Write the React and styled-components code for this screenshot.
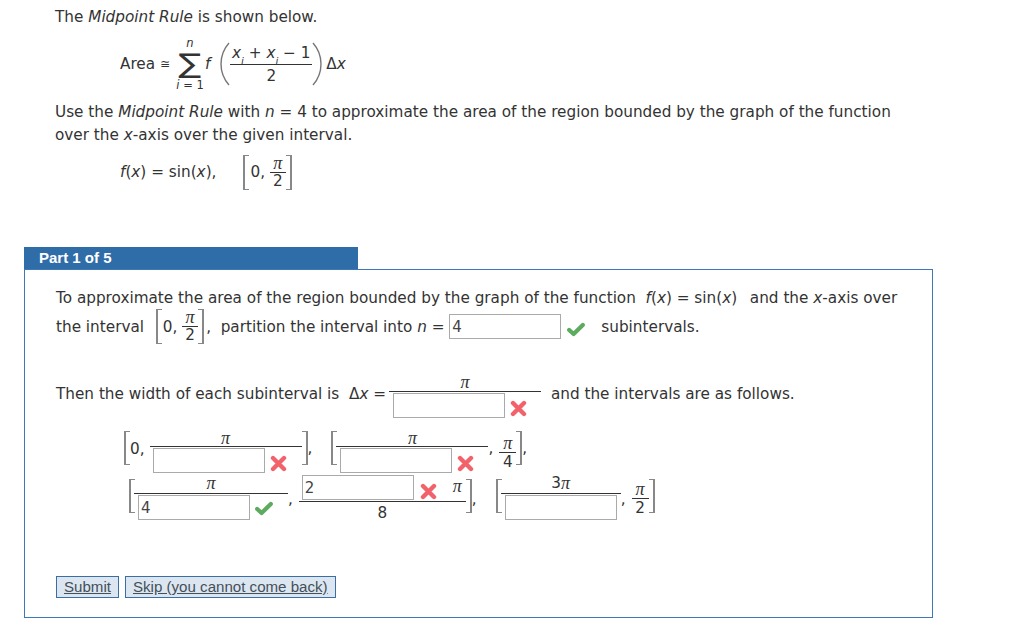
import React from 'react'
import styled, { createGlobalStyle } from 'styled-components'

const GlobalStyle = createGlobalStyle`
  html, body { margin: 0; padding: 0; background: #fff; }
  body {
    font-family: "DejaVu Sans", Verdana, sans-serif;
    font-size: 15.25px;
    color: #333;
  }
`

const Page = styled.div`
  width: 1024px;
  height: 628px;
  overflow: hidden;
  box-sizing: border-box;
  padding: 5px 91px 0 24px;
`

const Question = styled.div`
  padding-left: 31px;
  height: 242px;
`

const Line = styled.div`
  height: ${p => p.$h || 23}px;
  line-height: ${p => p.$h || 23}px;
  margin-top: ${p => p.$mt || 0}px;
  white-space: pre;
`

const MathRow = styled.div`
  display: flex;
  align-items: ${p => p.$align || 'center'};
  height: ${p => p.$h}px;
  margin-top: ${p => p.$mt || 0}px;
  padding-left: ${p => p.$pl || 0}px;
  white-space: pre;
`

const Gap = styled.span`
  display: inline-block;
  flex: none;
  width: ${p => p.$w}px;
`

const Piece = styled.span`
  flex: none;
  margin: ${p => p.$top || 0}px 0 ${p => p.$bottom || 0}px ${p => p.$left || 0}px;
  ${p => p.$size && `font-size: ${p.$size}px;`}
`

const Pi = styled.i`
  font-family: "Liberation Serif", serif;
  font-size: 18px;
`

const Frac = styled.span`
  display: inline-grid;
  flex: none;
  width: ${p => p.$w}px;
  grid-template-rows: ${p => (p.$free ? 'auto 1px auto' : '1fr 1px 1fr')};
  margin-top: ${p => p.$top || 0}px;
  margin-left: ${p => p.$ml || 0}px;
  line-height: ${p => p.$lh || 15}px;
`

const Num = styled.span`
  display: flex;
  justify-content: ${p => (p.$start ? 'flex-start' : 'center')};
  align-items: flex-end;
  padding: 0 0 ${p => p.$pb ?? 1}px ${p => (p.$start ? 3 : 0)}px;
`

const Bar = styled.span`
  display: block;
  background: #333;
`

const Den = styled.span`
  display: flex;
  justify-content: center;
  align-items: flex-start;
  padding-top: ${p => p.$pt || 1}px;
`

const AnswerDen = styled(Den)`
  justify-content: flex-start;
  padding: 1px 0 0 ${p => p.$pl || 3}px;
`

const Bracket = styled.span`
  display: block;
  flex: none;
  box-sizing: border-box;
  width: 6px;
  height: ${p => p.$h}px;
  margin-top: ${p => p.$top || 0}px;
  border: 1px solid #888;
  ${p => (p.$close
    ? 'border-left: 0; border-right-width: 2px;'
    : 'border-right: 0; border-left-width: 2px;')}
`

const Answer = styled.input`
  display: block;
  flex: none;
  box-sizing: border-box;
  width: 112px;
  height: 25px;
  margin: 0;
  padding: 0 2px;
  border: 1px solid #aaa;
  border-radius: 0;
  outline: none;
  background: #fff;
  color: #444;
  font-family: "DejaVu Sans", Verdana, sans-serif;
  font-size: 15px;
`

const Mark = styled.svg`
  display: block;
  flex: none;
  margin: ${p => p.$top || 7}px 0 0 ${p => p.$left || 5}px;
`

const Cross = props => (
  <Mark width="17" height="17" viewBox="0 0 17 17" {...props}>
    <path d="M3 3 L14 14 M14 3 L3 14" stroke="#f2626b" strokeWidth="4.4" strokeLinecap="round" />
  </Mark>
)

const Check = props => (
  <Mark width="18" height="15" viewBox="0 0 18 15" {...props}>
    <path d="M2.2 8 L6.6 12 L15.8 3" fill="none" stroke="#5cab5e" strokeWidth="4.2" strokeLinejoin="round" strokeLinecap="round" />
  </Mark>
)

const SumBlock = styled.span`
  display: inline-flex;
  flex: none;
  flex-direction: column;
  align-items: center;
  width: 30px;
  margin-left: 5px;
  font-size: 11.5px;
  line-height: 12px;
`

const Sigma = styled.span`
  font-size: 26px;
  line-height: 30px;
  color: #333;
  transform: scale(1.3, 1.05);
`

const Sub = styled.sub`
  font-size: 10px;
  line-height: 0;
  font-style: italic;
`

const Paren = ({ close }) => (
  <svg width="11" height="44" viewBox="0 0 11 44" style={{ flex: 'none' }}>
    <path d={close ? 'M1 1 Q9 10 9 22 Q9 34 1 43' : 'M10 1 Q2 10 2 22 Q2 34 10 43'} fill="none" stroke="#777" strokeWidth="1.4" />
  </svg>
)

const PartTab = styled.div`
  box-sizing: border-box;
  width: 334px;
  height: 22px;
  padding-left: 15px;
  background: #2f6da9;
  color: #fff;
  font-family: "Liberation Sans", Arial, sans-serif;
  font-size: 15px;
  font-weight: 700;
  line-height: 22px;
`

const Panel = styled.div`
  box-sizing: border-box;
  height: 349px;
  padding: 16px 0 0 31px;
  border: 1px solid #3f79b5;
`

const Buttons = styled.div`
  display: flex;
  gap: 6px;
  margin-top: 55px;
`

const SkipButton = styled.button`
  box-sizing: border-box;
  height: 22px;
  padding: 0 7px;
  border: 1px solid #3a6ea5;
  border-radius: 0;
  background: #dce6f1;
  color: #444f5a;
  font-family: "Liberation Sans", Arial, sans-serif;
  font-size: 15.1px;
  line-height: 20px;
  text-decoration: underline;
`

export default function App() {
  return (
    <Page>
      <GlobalStyle />
      <Question>
        <Line $h={24}>The <i>Midpoint Rule</i> is shown below.</Line>
        <MathRow $h={56} $mt={7} $pl={65}>
          <span>Area </span>
          <Piece $size={12}>≅</Piece>
          <SumBlock>
            <i>n</i>
            <Sigma>∑</Sigma>
            <span><i>i</i> = 1</span>
          </SumBlock>
          <i>f </i>
          <Gap $w={4} />
          <Paren />
          <Frac $w={82} $lh={18}>
            <Num $pb={2}><i>x</i><Sub>i</Sub><span> + </span><i>x</i><Sub>i</Sub><span> − 1</span></Num>
            <Bar />
            <Den $pt={2}>2</Den>
          </Frac>
          <Paren close />
          <Gap $w={3} />
          <span>Δ<i>x</i></span>
        </MathRow>
        <Line $mt={9}>Use the <i>Midpoint Rule</i> with <i>n</i> = 4 to approximate the area of the region bounded by the graph of the function</Line>
        <Line>over the <i>x</i>-axis over the given interval.</Line>
        <MathRow $h={36} $mt={7} $pl={65}>
          <span><i>f</i>(<i>x</i>) = sin(<i>x</i>),</span>
          <Gap $w={27} />
          <Bracket $h={35} />
          <Gap $w={1} />
          <span>0, </span>
          <Frac $w={16}>
            <Num><Pi>π</Pi></Num>
            <Bar />
            <Den>2</Den>
          </Frac>
          <Bracket $h={35} $close />
        </MathRow>
      </Question>

      <PartTab>Part 1 of 5</PartTab>
      <Panel>
        <Line $h={24}>To approximate the area of the region bounded by the graph of the function  <i>f</i>(<i>x</i>) = sin(<i>x</i>)  <Gap $w={3} />and the <i>x</i>-axis over</Line>
        <MathRow $h={35} $mt={-1}>
          <span>the interval  </span>
          <Gap $w={2} />
          <Bracket $h={35} />
          <Gap $w={1} />
          <span>0, </span>
          <Frac $w={16}>
            <Num><Pi>π</Pi></Num>
            <Bar />
            <Den>2</Den>
          </Frac>
          <Bracket $h={35} $close />
          <Gap $w={2} />
          <span>,  partition the interval into <i>n</i> = </span>
          <Answer defaultValue="4" />
          <Check $top={5} $left={6} />
          <Gap $w={16} />
          <span>subintervals.</span>
        </MathRow>
        <MathRow $h={44} $mt={25}>
          <Piece $top={6}>Then the width of each subinterval is  Δ<i>x</i> = </Piece>
          <Frac $w={152} $ml={-2}>
            <Num><Pi>π</Pi></Num>
            <Bar />
            <AnswerDen $pl={4}>
              <Answer />
              <Cross />
            </AnswerDen>
          </Frac>
          <Gap $w={10} />
          <Piece $top={6}>and the intervals are as follows.</Piece>
        </MathRow>

        <MathRow $h={44} $mt={18} $pl={68} $align="flex-start">
          <Bracket $h={34} />
          <Piece $top={9}>0,</Piece>
          <Gap $w={5} />
          <Frac $w={152} $free $lh={14}>
            <Num><Pi>π</Pi></Num>
            <Bar />
            <AnswerDen>
              <Answer />
              <Cross />
            </AnswerDen>
          </Frac>
          <Bracket $h={34} $close />
          <Piece $top={8}>,</Piece>
          <Gap $w={19} />
          <Bracket $h={34} />
          <Frac $w={152} $free $lh={14} $ml={-1}>
            <Num><Pi>π</Pi></Num>
            <Bar />
            <AnswerDen $pl={4}>
              <Answer />
              <Cross />
            </AnswerDen>
          </Frac>
          <Piece $top={8}>,</Piece>
          <Gap $w={6} />
          <Frac $w={17} $lh={16} $top={4}>
            <Num><Pi>π</Pi></Num>
            <Bar />
            <Den>4</Den>
          </Frac>
          <Bracket $h={34} $close />
          <Piece $top={8}>,</Piece>
        </MathRow>

        <MathRow $h={46} $pl={73} $align="flex-start">
          <Bracket $h={34} $top={4} />
          <Frac $w={154} $free $lh={17} $ml={-1}>
            <Num><Pi>π</Pi></Num>
            <Bar />
            <AnswerDen $pl={4}>
              <Answer defaultValue="4" />
              <Check $top={6} />
            </AnswerDen>
          </Frac>
          <Piece $top={15}>,</Piece>
          <Gap $w={6} />
          <Frac $w={167} $free>
            <Num $start>
              <Answer defaultValue="2" />
              <Cross $top={5} $left={6} />
              <Piece $left={16} $bottom={5}><Pi>π</Pi></Piece>
            </Num>
            <Bar />
            <Den $pt={4}>8</Den>
          </Frac>
          <Bracket $h={34} $top={4} $close />
          <Piece $top={15}>,</Piece>
          <Gap $w={19} />
          <Bracket $h={34} $top={4} />
          <Frac $w={120} $free $lh={17} $ml={-1}>
            <Num>3<Pi>π</Pi></Num>
            <Bar />
            <AnswerDen $pl={4}>
              <Answer />
            </AnswerDen>
          </Frac>
          <Piece $top={15}>,</Piece>
          <Gap $w={6} />
          <Frac $w={17} $top={6} $lh={16}>
            <Num><Pi>π</Pi></Num>
            <Bar />
            <Den>2</Den>
          </Frac>
          <Bracket $h={34} $top={4} $close />
        </MathRow>

        <Buttons>
          <SkipButton>Submit</SkipButton>
          <SkipButton>Skip (you cannot come back)</SkipButton>
        </Buttons>
      </Panel>
    </Page>
  )
}
